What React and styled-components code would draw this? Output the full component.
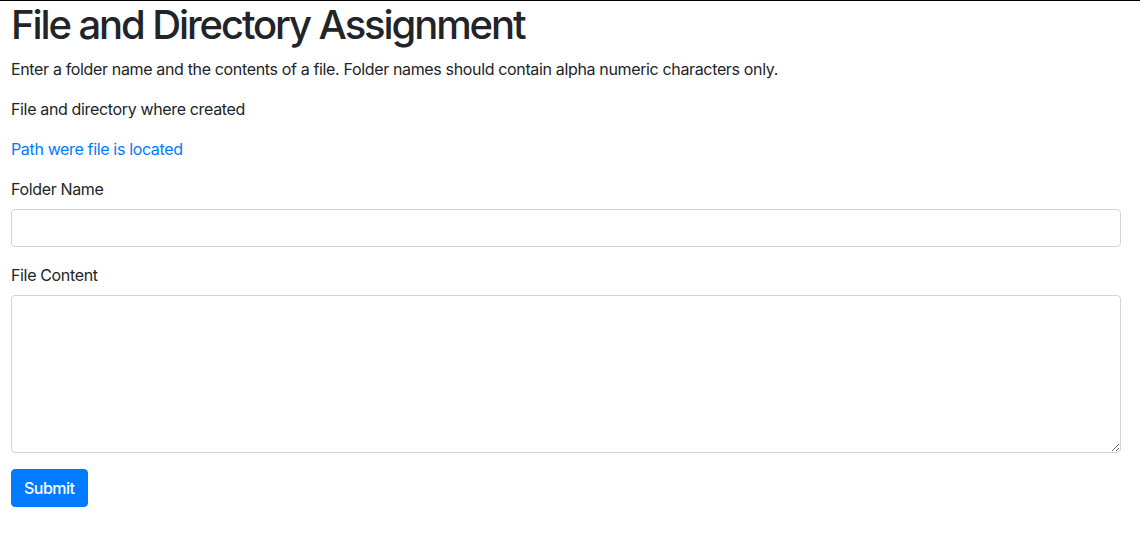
import React from "react";
import styled, { createGlobalStyle } from "styled-components";

const Global = createGlobalStyle`
  *, *::before, *::after { box-sizing: border-box; }
  html, body { margin: 0; padding: 0; background: #fff; }
  body {
    font-family: Inter, "Noto Sans", "Liberation Sans", sans-serif;
    font-size: 16px;
    line-height: 1.5;
    color: #212529;
    letter-spacing: -0.35px;
    border-top: 1px solid #000;
  }
`;

const Container = styled.div`
  width: 1110px;
  margin-left: 11px;
`;

const Title = styled.h1`
  margin: 0 0 8px;
  font-size: 40px;
  font-weight: 500;
  line-height: 1.2;
  letter-spacing: -2.1px;
`;

const Para = styled.p`
  margin: 0 0 16px;
`;

const Link = styled.a`
  color: #007bff;
  text-decoration: none;
`;

const Form = styled.form`
  display: flex;
  flex-direction: column;
  gap: 16px;
`;

const Group = styled.div`
  display: flex;
  flex-direction: column;
`;

const Label = styled.label`
  margin-bottom: 8px;
`;

const fieldCss = `
  display: block;
  width: 100%;
  padding: 6px 12px;
  font-family: inherit;
  font-size: 16px;
  line-height: 1.5;
  color: #495057;
  background: #fff;
  border: 1px solid #ced4da;
  border-radius: 4px;
  margin: 0;
`;

const Input = styled.input`
  ${fieldCss}
  height: 38px;
`;

const TextArea = styled.textarea`
  ${fieldCss}
  height: 158px;
  resize: vertical;
`;

const Button = styled.button`
  align-self: flex-start;
  font-family: inherit;
  font-size: 16px;
  font-weight: 500;
  line-height: 1.5;
  letter-spacing: -0.5px;
  padding: 6px 12px;
  color: #fff;
  background: #007bff;
  border: 1px solid #007bff;
  border-radius: 4px;
  cursor: pointer;
`;

export default function App() {
  return (
    <>
      <Global />
      <Container>
        <Title>File and Directory Assignment</Title>
        <Para>
          Enter a folder name and the contents of a file. Folder names should
          contain alpha numeric characters only.
        </Para>
        <Para>File and directory where created</Para>
        <Para>
          <Link href="#">Path were file is located</Link>
        </Para>
        <Form onSubmit={(e) => e.preventDefault()}>
          <Group>
            <Label htmlFor="folder">Folder Name</Label>
            <Input id="folder" type="text" />
          </Group>
          <Group>
            <Label htmlFor="content">File Content</Label>
            <TextArea id="content" rows={6} />
          </Group>
          <Button type="submit">Submit</Button>
        </Form>
      </Container>
    </>
  );
}
